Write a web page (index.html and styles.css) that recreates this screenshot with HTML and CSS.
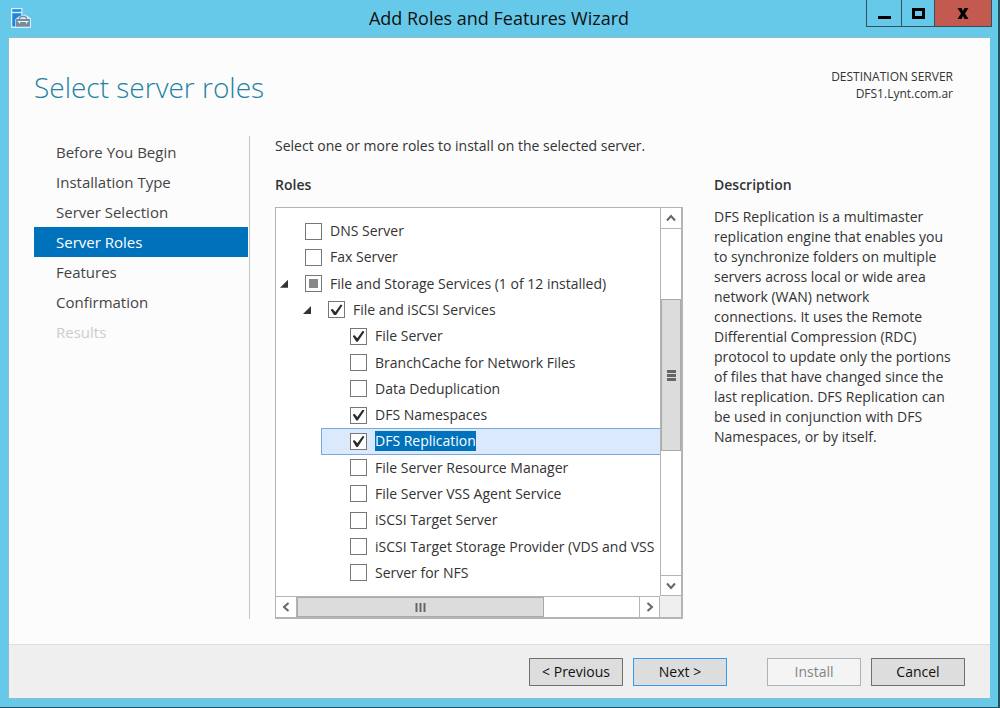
FILE: index.html
```html
<!DOCTYPE html>
<html lang="en">
<head>
    <meta charset="UTF-8">
    <title>Add Roles and Features Wizard</title>
    <link rel="stylesheet" href="styles.css">
</head>
<body>
<div class="window">
    <header class="titlebar">
        <svg class="app-icon" width="20" height="20" viewBox="0 0 20 20">
            <path d="M0 0h11.500v7.500l2-1 3 1.500 3.500 2.500V20H0z" fill="#d8eef8"/>
            <path d="M1.300 1.300h9v2.500h-9zM1.300 5.300h9v2l-3 1.500-3 2.500v7.200h-3z" fill="#1b86dc"/>
            <path d="M8.500 11v-1l1.500-1.500h4l1.500 1.500v1" fill="none" stroke="#788b9d" stroke-width="1.300"/>
            <path d="M5 11h14v7.700H5z" fill="#788b9d"/>
            <path d="M6.500 13.500h11M8.500 13v2.500M15.500 13v2.500" fill="none" stroke="#eef6fa" stroke-width="1.200"/>
        </svg>
        <h1>Add Roles and Features Wizard</h1>
        <div class="controls">
            <button class="minimize" aria-label="Minimize"><svg width="13" height="7" viewBox="0 0 13 7"><path d="M0 4h13v3H0z"/></svg></button>
            <button class="maximize" aria-label="Maximize"><svg width="13" height="11" viewBox="0 0 13 11"><path d="M1.500 1.500h10v8h-10z" fill="none" stroke="#000" stroke-width="3"/></svg></button>
            <button class="close" aria-label="Close"><svg width="12" height="11" viewBox="0 0 12 11"><path d="M0.500 0h4L6 3l1.500-3h4L8 5.500l3.500 5.500h-4L6 8l-1.500 3h-4L4 5.500z"/></svg></button>
        </div>
    </header>
    <main class="client">
        <div class="heading">
            <h2>Select server roles</h2>
            <p class="destination">DESTINATION SERVER<br>DFS1.Lynt.com.ar</p>
        </div>
        <div class="content">
            <nav class="steps">
                <a href="#before">Before You Begin</a>
                <a href="#type">Installation Type</a>
                <a href="#server">Server Selection</a>
                <a href="#roles" class="current">Server Roles</a>
                <a href="#features">Features</a>
                <a href="#confirm">Confirmation</a>
                <a href="#results" class="disabled">Results</a>
            </nav>
            <section class="roles">
                <p class="intro">Select one or more roles to install on the selected server.</p>
                <h3>Roles</h3>
                <div class="treebox">
                    <ul class="tree">
                        <li class="level1"><span class="expander"></span><label><input type="checkbox"><span>DNS Server</span></label></li>
                        <li class="level1"><span class="expander"></span><label><input type="checkbox"><span>Fax Server</span></label></li>
                        <li class="level1"><span class="expander open"></span><label><input type="checkbox" class="partial"><span>File and Storage Services (1 of 12 installed)</span></label></li>
                        <li class="level2"><span class="expander open"></span><label><input type="checkbox" checked><span>File and iSCSI Services</span></label></li>
                        <li class="level3"><span class="expander"></span><label><input type="checkbox" checked><span>File Server</span></label></li>
                        <li class="level3"><span class="expander"></span><label><input type="checkbox"><span>BranchCache for Network Files</span></label></li>
                        <li class="level3"><span class="expander"></span><label><input type="checkbox"><span>Data Deduplication</span></label></li>
                        <li class="level3"><span class="expander"></span><label><input type="checkbox" checked><span>DFS Namespaces</span></label></li>
                        <li class="level3 selected"><span class="expander"></span><label><input type="checkbox" checked><span>DFS Replication</span></label></li>
                        <li class="level3"><span class="expander"></span><label><input type="checkbox"><span>File Server Resource Manager</span></label></li>
                        <li class="level3"><span class="expander"></span><label><input type="checkbox"><span>File Server VSS Agent Service</span></label></li>
                        <li class="level3"><span class="expander"></span><label><input type="checkbox"><span>iSCSI Target Server</span></label></li>
                        <li class="level3"><span class="expander"></span><label><input type="checkbox"><span>iSCSI Target Storage Provider (VDS and VSS</span></label></li>
                        <li class="level3"><span class="expander"></span><label><input type="checkbox"><span>Server for NFS</span></label></li>
                    </ul>
                    <div class="scroll vertical">
                        <button aria-label="Scroll up"><svg width="10" height="8" viewBox="0 0 10 8"><path d="M1 6.500l4-4.500 4 4.500"/></svg></button>
                        <div class="before"></div>
                        <div class="thumb"><svg width="9" height="11" viewBox="0 0 9 11"><path d="M0 1.500h9M0 5.500h9M0 9.500h9"/></svg></div>
                        <div class="after"></div>
                        <button aria-label="Scroll down"><svg width="10" height="8" viewBox="0 0 10 8"><path d="M1 1.500l4 4.500 4-4.500"/></svg></button>
                    </div>
                    <div class="scroll horizontal">
                        <button aria-label="Scroll left"><svg width="8" height="10" viewBox="0 0 8 10"><path d="M6.500 1L2 5l4.500 4"/></svg></button>
                        <div class="thumb"><svg width="11" height="9" viewBox="0 0 11 9"><path d="M1.500 0v9M5.500 0v9M9.500 0v9"/></svg></div>
                        <div class="after"></div>
                        <button aria-label="Scroll right"><svg width="8" height="10" viewBox="0 0 8 10"><path d="M1.500 1L6 5 1.500 9"/></svg></button>
                    </div>
                </div>
            </section>
            <aside class="description">
                <h3>Description</h3>
                <p>DFS Replication is a multimaster replication engine that enables you to synchronize folders on multiple servers across local or wide area network (WAN) network connections. It uses the Remote Differential Compression (RDC) protocol to update only the portions of files that have changed since the last replication. DFS Replication can be used in conjunction with DFS Namespaces, or by itself.</p>
            </aside>
        </div>
        <footer class="buttons">
            <button>&lt; Previous</button>
            <button class="default">Next &gt;</button>
            <button class="install" disabled>Install</button>
            <button>Cancel</button>
        </footer>
    </main>
</div>
</body>
</html>
```
FILE: styles.css
```css
* {
    box-sizing: border-box;
}
body {
    margin: 0;
    font-family: "Open Sans", "Noto Sans", sans-serif;
    font-size: 14px;
    line-height: 20px;
    color: #333;
}
h1, h2, h3, p, ul {
    margin: 0;
    padding: 0;
}
button {
    font: inherit;
    padding: 0;
}
.window {
    display: flex;
    flex-direction: column;
    height: 100vh;
    padding: 0 8px 8px;
    background-color: #66c9e9;
    border-right: 2px solid #27505f;
    border-bottom: 1px solid #27505f;
}

.titlebar {
    display: grid;
    grid-template-columns: 1fr auto 1fr;
    height: 37px;
    flex-shrink: 0;
}
.app-icon {
    margin: 8px 0 0 3px;
}
.titlebar h1 {
    font-size: 18px;
    font-weight: 400;
    line-height: 36px;
    color: #111;
}
.controls {
    display: flex;
    justify-self: end;
    margin-right: -2px;
    height: 27px;
    border: 1px solid #34505b;
    border-top: 0;
}
.controls button {
    display: flex;
    align-items: center;
    justify-content: center;
    width: 33px;
    background: none;
    border: 0;
    border-right: 1px solid #34505b;
}
.controls .minimize {
    width: 35px;
    padding-top: 4px;
}
.controls .close {
    width: 56px;
    background-color: #c35a50;
    border-right: 0;
}

.client {
    flex: 1;
    min-height: 0;
    display: flex;
    flex-direction: column;
    background-color: #fcfcfc;
    border: 1px solid #8fbccf;
    border-right: 0;
}
.heading {
    display: flex;
    justify-content: space-between;
    padding: 30px 37px 0 25px;
    height: 98px;
}
.heading h2 {
    font-size: 28px;
    font-weight: 300;
    line-height: 38px;
    color: #2382a4;
}
.destination {
    font-size: 12px;
    line-height: 17px;
    text-align: right;
}
.content {
    flex: 1;
    min-height: 0;
    display: flex;
    padding: 0 30px 25px 25px;
}
.steps {
    width: 216px;
    flex-shrink: 0;
    padding: 1px 1px 0 0;
    border-right: 1px solid #c5c5c5;
}
.steps a {
    display: block;
    padding-left: 22px;
    font-size: 15px;
    line-height: 30px;
    color: #444;
    text-decoration: none;
}
.steps .current {
    background-color: #0072bc;
    color: #fff;
}
.steps .disabled {
    color: #ccc;
}

.roles {
    flex: 408;
    min-width: 0;
    display: flex;
    flex-direction: column;
    margin-left: 25px;
}
h3 {
    font-size: 14px;
    line-height: 20px;
    font-weight: 600;
}
.intro {
    margin-bottom: 19px;
}
.treebox {
    flex: 1;
    min-height: 0;
    display: grid;
    grid-template-columns: 1fr 21px;
    grid-template-rows: 1fr 21px;
    margin-top: 12px;
    border: 2px solid #b4b4b4;
    border-width: 1px 2px 2px 1px;
    background-color: #efefef;
}
.tree {
    display: flex;
    flex-direction: column;
    min-width: 0;
    overflow: hidden;
    padding: 10px 0;
    list-style: none;
    background-color: #fff;
}
.tree li {
    flex: 1;
    display: flex;
    align-items: center;
    white-space: nowrap;
    border: 1px solid transparent;
    border-right: 0;
}
.level2 {
    margin-left: 23px;
}
.level3 {
    margin-left: 45px;
}
.expander {
    width: 28px;
    flex-shrink: 0;
}
.expander.open::before {
    content: "";
    display: block;
    width: 8px;
    height: 8px;
    margin-left: 3px;
    background-color: #333;
    clip-path: polygon(100% 0, 100% 100%, 0 100%);
}
.tree label {
    display: flex;
    align-items: center;
    gap: 8px;
}
.tree input {
    appearance: none;
    flex-shrink: 0;
    display: grid;
    place-items: center;
    width: 17px;
    height: 17px;
    margin: 0;
    border: 1px solid #777;
    background-color: #fff;
}
.tree input:checked::before {
    content: "";
    width: 12px;
    height: 11px;
    background-color: #2b2b2b;
    clip-path: polygon(0 45%, 18% 40%, 40% 68%, 85% 0, 100% 8%, 44% 100%, 32% 100%);
}
.tree .partial::before {
    content: "";
    width: 9px;
    height: 9px;
    background-color: #888;
}
.tree .selected {
    background-color: #dbe9fd;
    border-color: #7aa7dd;
}
.selected label span {
    background-color: #0072bc;
    color: #fff;
}

.scroll {
    display: flex;
    background-color: #fff;
}
.scroll svg {
    fill: none;
    stroke: #666;
    stroke-width: 2;
}
.scroll button, .thumb {
    display: flex;
    align-items: center;
    justify-content: center;
}
.scroll button {
    flex: 0 0 21px;
    border: 0 solid #b4b4b4;
    background-color: #fff;
}
.thumb {
    background-color: #dcdcdc;
    border: 1px solid #aaa;
}
.vertical {
    flex-direction: column;
    border-left: 1px solid #b4b4b4;
}
.vertical button:first-child {
    border-bottom-width: 1px;
}
.vertical button:last-child {
    border-top-width: 1px;
    border-bottom-width: 1px;
}
.vertical .before {
    flex: 71;
}
.vertical .thumb {
    flex: 151;
}
.vertical .after {
    flex: 125;
}
.vertical .thumb svg {
    stroke-width: 3;
}
.horizontal {
    border-top: 1px solid #b4b4b4;
}
.horizontal button {
    border-right-width: 1px;
}
.horizontal button:last-child {
    border-left-width: 1px;
}
.horizontal .thumb {
    flex: 246;
}
.horizontal .after {
    flex: 96;
}

.description {
    flex: 246;
    min-width: 0;
    padding-top: 39px;
    margin-left: 31px;
}
.description p {
    margin-top: 12px;
    padding-right: 5px;
}

.buttons {
    display: flex;
    justify-content: flex-end;
    gap: 10px;
    padding: 13px 25px 12px;
    background-color: #efefef;
    border-top: 1px solid #dedede;
}
.buttons button {
    width: 94px;
    height: 28px;
    background-color: #ddd;
    border: 1px solid #707070;
    color: #111;
}
.buttons .default {
    border-color: #3399ff;
}
.buttons .install {
    margin-left: 30px;
    background-color: #f4f4f4;
    border-color: #adb2b5;
    color: #838383;
}
```
